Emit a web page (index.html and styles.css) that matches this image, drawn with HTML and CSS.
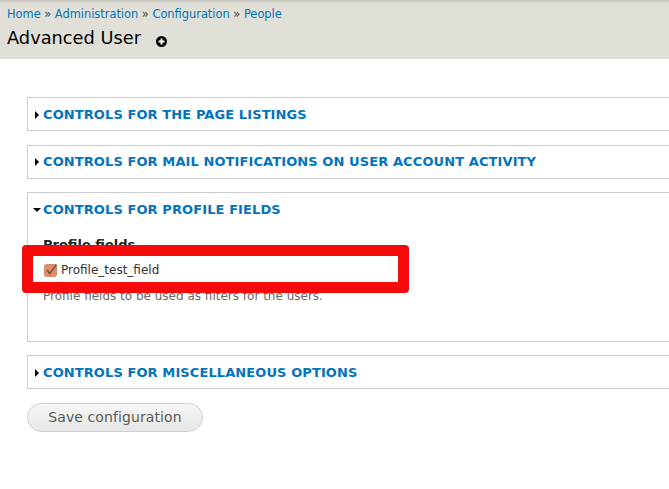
FILE: index.html
```html
<!DOCTYPE html>
<html lang="en">
<head>
<meta charset="utf-8">
<title>Advanced User</title>
<link rel="stylesheet" href="styles.css">
</head>
<body>
<header class="head">
  <nav class="crumbs"><a href="#">Home</a> » <a href="#">Administration</a> » <a href="#">Configuration</a> » <a href="#">People</a></nav>
  <h1 class="title">Advanced User
    <svg class="shortcut" width="11" height="11" viewBox="0 0 11 11"><circle cx="5.5" cy="5.5" r="5.5" fill="#000"/><path d="M5.5 2.5v6M2.5 5.5h6" stroke="#fff" stroke-width="2"/></svg>
  </h1>
</header>
<main class="content">
  <section class="set">
    <h2 class="legend"><svg class="arrow" width="4" height="8" viewBox="0 0 4 8"><path d="M0 0l4 4-4 4z"/></svg><a href="#">Controls for the page listings</a></h2>
  </section>
  <section class="set tight">
    <h2 class="legend"><svg class="arrow" width="4" height="8" viewBox="0 0 4 8"><path d="M0 0l4 4-4 4z"/></svg><a href="#">Controls for mail notifications on user account activity</a></h2>
  </section>
  <section class="set open">
    <h2 class="legend"><svg class="arrow down" width="8" height="4" viewBox="0 0 8 4"><path d="M0 0h8L4 4z"/></svg><a href="#">Controls for profile fields</a></h2>
    <div class="fields">
      <div class="label">Profile fields</div>
      <label class="check">
        <svg class="box" width="14" height="14" viewBox="0 0 14 14"><rect x=".5" y="1.500" width="12" height="12" rx="2" fill="#e58c66" stroke="#d08a68"/><path d="M3 7l2.800 3.500L12.500 1.500" fill="none" stroke="#6b5044" stroke-width="1.400"/></svg>
        Profile_test_field
      </label>
      <p class="desc">Profile fields to be used as filters for the users.</p>
    </div>
  </section>
  <section class="set">
    <h2 class="legend"><svg class="arrow" width="4" height="8" viewBox="0 0 4 8"><path d="M0 0l4 4-4 4z"/></svg><a href="#">Controls for miscellaneous options</a></h2>
  </section>
  <button class="save" type="button">Save configuration</button>
</main>
<div class="mark"></div>
</body>
</html>
```
FILE: styles.css
```css
html, body { margin: 0; padding: 0; }
body {
  width: 669px;
  height: 489px;
  overflow: hidden;
  position: relative;
  background: #fff;
  font-family: "DejaVu Sans", sans-serif;
  color: #333;
}
a { color: #0074bd; text-decoration: none; }
.head {
  height: 59px;
  box-sizing: border-box;
  padding: 8px 7px 0;
  background: linear-gradient(#c9c9c2 0, #e0e0d8 4px);
}
.crumbs { font-size: 11.4px; line-height: 13px; color: #444; height: 13px; }
.crumbs a { color: #0074bd; }
.title {
  margin: 7px 0 0;
  font-size: 17.8px;
  line-height: 20px;
  font-weight: 400;
  color: #000;
}
.shortcut { margin-left: 9px; vertical-align: -3px; }
.content { padding: 38px 0 0 27px; }
.set {
  height: 34px;
  box-sizing: border-box;
  margin-bottom: 14px;
  border: 1px solid #ccc;
  border-right: 0;
  padding: 9px 0 0 7px;
}
.set.tight { padding-top: 8px; }
.set.open { height: 150px; margin-bottom: 13px; margin-top: -1px; }
.legend {
  display: flex;
  align-items: center;
  margin: 0;
  height: 15px;
  font-size: 13px;
  line-height: 15px;
  font-weight: 700;
  letter-spacing: .1px;
  text-transform: uppercase;
}
.arrow { margin-right: 4px; flex: none; }
.arrow.down { margin-left: -2px; margin-right: 2px; }
.fields { padding: 20px 0 0 8px; }
.label { font-size: 13px; line-height: 15px; font-weight: 700; color: #222; }
.check {
  display: flex;
  align-items: center;
  gap: 3px;
  margin-top: 10px;
  height: 15px;
  font-size: 12px;
  color: #333;
}
.box { flex: none; margin-left: 1px; margin-top: 1px; }
.desc { margin: 12px 0 0; font-size: 12px; line-height: 14px; color: #666; }
.save {
  display: block;
  width: 176px;
  height: 29px;
  padding: 0 0 2px;
  border: 1px solid #d0d0d0;
  border-radius: 15px;
  background: linear-gradient(#f6f6f6, #e6e6e6);
  font: 14px "DejaVu Sans", sans-serif;
  letter-spacing: .1px;
  color: #5a5a5a;
}
.mark {
  position: absolute;
  left: 22px;
  top: 245px;
  width: 365px;
  height: 26px;
  border: 11px solid #f50a0a;
  border-radius: 4px;
}
```
